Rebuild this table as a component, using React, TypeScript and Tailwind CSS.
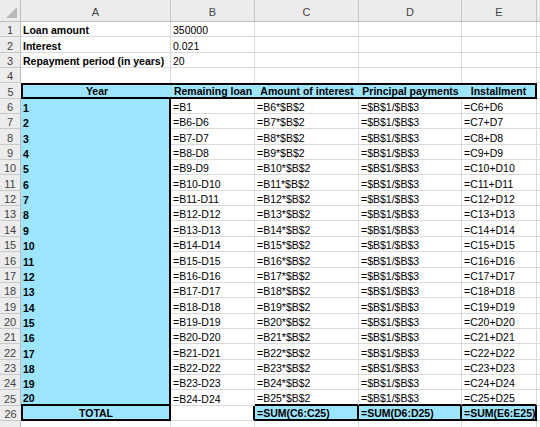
import React from 'react';

const BLUE = 'bg-[#9de5fd]';

// base cell: white with excel gridlines on right/bottom
const plain = 'border-r border-b border-r-[#dadada] border-b-[#dadada] bg-white';

interface RowProps {
    num?: number;
    cells: { text?: string; cls: string }[];
    thickHead?: boolean;
}

const Row: React.FC<RowProps> = ({ num, cells, thickHead }) => (
    <>
        <div
            className={`flex items-end justify-center bg-[#ececec] text-[#444] text-[11px] border-b border-b-[#c9c9c9] ${
                thickHead ? 'border-r-0' : 'border-r border-r-[#bdbdbd]'
            }`}
        >
            {num}
        </div>
        {cells.map((c, i) => (
            <div key={i} className={`flex items-end overflow-hidden whitespace-nowrap px-[2px] ${c.cls}`}>
                {c.text}
            </div>
        ))}
    </>
);

export default function App() {
    const dataRows = Array.from({ length: 20 }, (_, i) => {
        const r = i + 6;
        const last = r === 25;
        return {
            num: r,
            cells: [
                {
                    text: String(i + 1),
                    cls: last
                        ? `${BLUE} font-bold border-r-2 border-b-2 border-black`
                        : `${BLUE} font-bold border-r-2 border-r-black`,
                },
                { text: i === 0 ? '=B1' : `=B${r - 1}-D${r - 1}`, cls: plain },
                {
                    text: `=B${r}*$B$2`,
                    cls: last ? 'border-r border-r-[#dadada] border-b-2 border-b-black bg-white' : plain,
                },
                {
                    text: '=$B$1/$B$3',
                    cls: last ? 'border-r border-r-[#dadada] border-b-2 border-b-black bg-white' : plain,
                },
                {
                    text: `=C${r}+D${r}`,
                    cls: last ? 'border-r border-r-[#dadada] border-b-2 border-b-black bg-white' : plain,
                },
                { cls: plain },
            ],
        };
    });

    const noBottom = 'border-r border-r-[#dadada] bg-white';

    return (
        <div className="h-[427px] w-[540px] overflow-hidden bg-white font-['Liberation_Sans',Arial,sans-serif] text-[10.5px] leading-[12px] text-black">
            <div className="grid grid-cols-[21px_150px_84px_104px_103px_75px_1fr] grid-rows-[22px_repeat(27,15.35px)]">
                {/* column headers */}
                <div className="relative bg-[#ececec] border-r border-b border-r-[#bdbdbd] border-b-[#bdbdbd]">
                    <svg className="absolute right-[3px] bottom-[3px]" width="11" height="11" viewBox="0 0 11 11">
                        <polygon points="11,0 11,11 0,11" fill="#b9b9b9" />
                    </svg>
                </div>
                {['A', 'B', 'C', 'D', 'E', ''].map((h, i) => (
                    <div
                        key={i}
                        className="flex items-end justify-center pb-[3px] bg-[#ececec] text-[#444] text-[11px] border-r border-b border-r-[#c6c6c6] border-b-[#bdbdbd]"
                    >
                        {h}
                    </div>
                ))}

                <Row
                    num={1}
                    cells={[
                        { text: 'Loan amount', cls: `${plain} font-bold` },
                        { text: '350000', cls: plain },
                        { cls: plain },
                        { cls: plain },
                        { cls: plain },
                        { cls: plain },
                    ]}
                />
                <Row
                    num={2}
                    cells={[
                        { text: 'Interest', cls: `${plain} font-bold` },
                        { text: '0.021', cls: plain },
                        { cls: plain },
                        { cls: plain },
                        { cls: plain },
                        { cls: plain },
                    ]}
                />
                <Row
                    num={3}
                    cells={[
                        { text: 'Repayment period (in years)', cls: `${plain} font-bold` },
                        { text: '20', cls: plain },
                        { cls: plain },
                        { cls: plain },
                        { cls: plain },
                        { cls: plain },
                    ]}
                />
                <Row
                    num={4}
                    cells={[
                        { cls: noBottom },
                        { cls: noBottom },
                        { cls: noBottom },
                        { cls: noBottom },
                        { cls: noBottom },
                        { cls: plain },
                    ]}
                />

                {/* table header */}
                <Row
                    num={5}
                    thickHead
                    cells={[
                        { text: 'Year', cls: `${BLUE} justify-center font-bold border-l-2 border-t-2 border-b-2 border-black` },
                        { text: 'Remaining loan', cls: `${BLUE} justify-center font-bold border-t-2 border-b-2 border-black` },
                        { text: 'Amount of interest', cls: `${BLUE} justify-center font-bold border-t-2 border-b-2 border-black` },
                        { text: 'Principal payments', cls: `${BLUE} justify-center font-bold border-t-2 border-b-2 border-black` },
                        { text: 'Installment', cls: `${BLUE} justify-center font-bold border-t-2 border-b-2 border-r-2 border-black` },
                        { cls: plain },
                    ]}
                />

                {dataRows.map((row) => (
                    <Row key={row.num} num={row.num} cells={row.cells} />
                ))}

                {/* totals */}
                <Row
                    num={26}
                    thickHead
                    cells={[
                        { text: 'TOTAL', cls: `${BLUE} justify-center font-bold border-l-2 border-r-2 border-b-2 border-black` },
                        { cls: 'border-r-2 border-b border-r-black border-b-[#dadada] bg-white' },
                        { text: '=SUM(C6:C25)', cls: `${BLUE} font-bold border-r-2 border-b-2 border-black` },
                        { text: '=SUM(D6:D25)', cls: `${BLUE} font-bold border-r-2 border-b-2 border-black` },
                        { text: '=SUM(E6:E25)', cls: `${BLUE} font-bold border-r-2 border-b-2 border-black` },
                        { cls: plain },
                    ]}
                />
                {/* row 27, only a sliver shows */}
                <Row
                    cells={[
                        { cls: plain },
                        { cls: plain },
                        { cls: plain },
                        { cls: plain },
                        { cls: plain },
                        { cls: plain },
                    ]}
                />
            </div>
        </div>
    );
}
